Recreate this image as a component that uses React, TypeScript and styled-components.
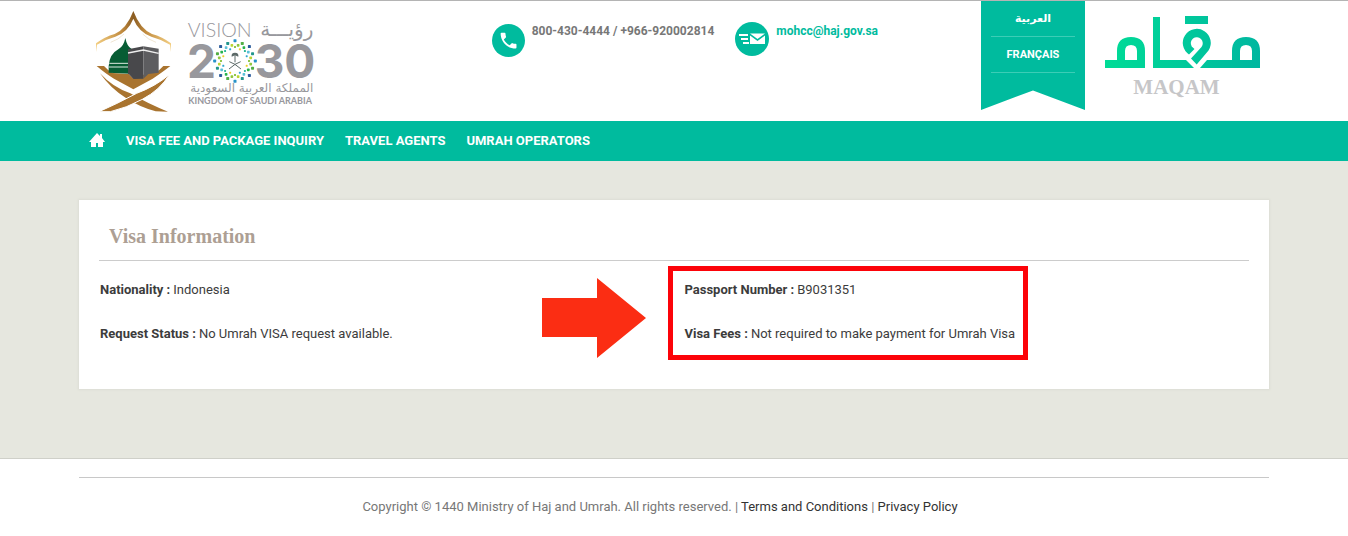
import React from "react";
import styled, { createGlobalStyle } from "styled-components";

const teal = "#00bb9e";

const GlobalStyle = createGlobalStyle`
  * { box-sizing: border-box; }
  body {
    margin: 0;
    background: #fff;
    color: #3c3c3c;
    font: 13px/20px Roboto, "Liberation Sans", sans-serif;
  }
  a { color: inherit; text-decoration: none; }
`;

const Container = styled.div`
  width: 100%;
  max-width: 1190px;
  margin: 0 auto;
`;

const Header = styled.header`
  border-top: 1px solid #b4b4b4;
`;

const HeaderRow = styled(Container)`
  display: flex;
  height: 120px;
  padding: 0 9px 0 16px;
`;

const LogoLink = styled.a`
  display: block;
  padding-top: 9px;
  svg { display: block; }
`;

const Contacts = styled.div`
  display: flex;
  flex: 1;
  justify-content: flex-end;
  gap: 21px;
  padding: 21px 103px 0 0;
`;

const Contact = styled.a<{ $accent?: boolean }>`
  display: flex;
  gap: 7px;
  align-items: flex-start;
  white-space: nowrap;
  font-size: 12px;
  line-height: 18px;
  font-weight: 700;
  color: ${(p) => (p.$accent ? teal : "#777")};
`;

const Ribbon = styled.div`
  width: 104px;
  height: 109px;
  padding: 0 10px;
  background: ${teal};
  clip-path: polygon(0 0, 100% 0, 100% 100%, 50% 82%, 0 100%);
`;

const Language = styled.a`
  display: block;
  height: 36px;
  border-bottom: 1px solid #3ccdb6;
  color: #fff;
  font: 700 11px/36px Roboto, "DejaVu Sans", sans-serif;
  text-align: center;
`;

const Brand = styled.a`
  display: flex;
  flex-direction: column;
  align-items: center;
  padding: 15px 0 0 20px;
`;

const BrandName = styled.span`
  padding-right: 12px;
  color: #c6c6c8;
  font: 700 21px/36px "Liberation Serif", serif;
`;

const Nav = styled.nav`
  background: ${teal};
`;

const NavRow = styled(Container)`
  display: flex;
  align-items: center;
  gap: 21px;
  height: 40px;
  padding: 0 10px;
  color: #fff;
  font-size: 13px;
  font-weight: 700;
  svg { display: block; }
`;

const Main = styled.main`
  padding: 39px 0 69px;
  background: #e6e7df;
  border-bottom: 1px solid #cfd0c9;
`;

const Card = styled(Container)`
  padding: 20px 20px 33px;
  background: #fff;
  box-shadow: 0 0 2px 1px #dcddd5;
`;

const Title = styled.h1`
  margin: 0;
  padding: 0 10px 8px;
  border-bottom: 1px solid #ccc;
  color: #ad9f94;
  font: 700 20px/32px "Liberation Serif", serif;
`;

const Details = styled.div`
  display: grid;
  grid-template-columns: 1fr 1fr;
  column-gap: 20px;
  padding: 7px 0 0 1px;
`;

const Column = styled.dl`
  position: relative;
  margin: 0;
`;

const Field = styled.div`
  display: flex;
  gap: 3px;
  line-height: 44px;
  dt { font-weight: 700; }
  dd { margin: 0; }
`;

const Highlight = styled.div`
  position: absolute;
  left: -17px;
  top: -2px;
  width: 360px;
  height: 94px;
  border: 5px solid #fc0309;
  pointer-events: none;
`;

const Arrow = styled.svg`
  position: absolute;
  left: -143px;
  top: 10px;
`;

const FooterRow = styled(Container)`
  margin-top: 18px;
  padding: 19px 28px 19px 0;
  border-top: 1px solid #c8c8c8;
  color: #777;
  text-align: center;
  a { color: #333; }
`;

export default function App() {
  return (
    <>
      <GlobalStyle />
      <Header>
        <HeaderRow>
          <LogoLink href="#" aria-label="Home page">
            <VisionLogo />
          </LogoLink>
          <Contacts>
            <Contact href="tel:8004304444">
              <PhoneIcon />
              800-430-4444 / +966-920002814
            </Contact>
            <Contact href="mailto:mohcc@haj.gov.sa" $accent>
              <MailIcon />
              mohcc@haj.gov.sa
            </Contact>
          </Contacts>
          <Ribbon>
            <Language href="#" lang="ar">العربية</Language>
            <Language href="#" lang="fr">FRANÇAIS</Language>
          </Ribbon>
          <Brand href="#">
            <MaqamMark />
            <BrandName>MAQAM</BrandName>
          </Brand>
        </HeaderRow>
      </Header>
      <Nav>
        <NavRow>
          <a href="#" aria-label="Home"><HomeIcon /></a>
          <a href="#">VISA FEE AND PACKAGE INQUIRY</a>
          <a href="#">TRAVEL AGENTS</a>
          <a href="#">UMRAH OPERATORS</a>
        </NavRow>
      </Nav>
      <Main>
        <Card>
          <Title>Visa Information</Title>
          <Details>
            <Column>
              <Field><dt>Nationality :</dt><dd>Indonesia</dd></Field>
              <Field><dt>Request Status :</dt><dd>No Umrah VISA request available.</dd></Field>
            </Column>
            <Column>
              <Field><dt>Passport Number :</dt><dd>B9031351</dd></Field>
              <Field><dt>Visa Fees :</dt><dd>Not required to make payment for Umrah Visa</dd></Field>
              <Highlight />
              <Arrow width="104" height="80" viewBox="0 0 104 80" aria-hidden="true">
                <path d="M0 20H55V0L104 40L55 80V59H0Z" fill="#fb2d13" />
              </Arrow>
            </Column>
          </Details>
        </Card>
      </Main>
      <footer>
        <FooterRow>
          Copyright © 1440 Ministry of Haj and Umrah. All rights reserved. |{" "}
          <a href="#">Terms and Conditions</a> | <a href="#">Privacy Policy</a>
        </FooterRow>
      </footer>
    </>
  );
}

const dotRings = [
  { r: 38, n: 16, size: 6, shift: 0, colors: ["#80bd2c", "#edcf25", "#29b796", "#2fa5cf"] },
  { r: 48, n: 16, size: 8, shift: 0.5, colors: ["#91c83e", "#28b34b", "#5cc0d8", "#b9d533"] },
  { r: 57, n: 16, size: 9, shift: 0, colors: ["#2793c8", "#52ae45", "#2b5c9b", "#22968c"] },
];

function VisionLogo() {
  return (
    <svg width="224" height="104" viewBox="45 30 672 312" role="img" aria-label="Vision 2030">
      <defs>
        <linearGradient id="gold" x1="0" x2="1">
          <stop offset="0" stopColor="#f3cf83" />
          <stop offset=".35" stopColor="#c08a3e" />
          <stop offset=".5" stopColor="#8a5c22" />
          <stop offset=".65" stopColor="#c08a3e" />
          <stop offset="1" stopColor="#f3cf83" />
        </linearGradient>
      </defs>
      <path d="M48 156V130Q75 110 104 102Q140 86 160 33Q180 86 216 102Q246 110 273 130V156L270 134Q244 118 214 110Q176 96 160 56Q144 96 106 110Q76 118 51 134Z" fill="url(#gold)" />
      <path d="M92 127Q116 119 132 102M228 127Q204 119 188 102" fill="none" stroke="#e9d9bd" strokeWidth="2" />
      <path d="M50 198H72Q84 212 98 219L146 222L160 236L205 218L224 219Q238 212 250 198H271Q240 222 218 236L160 268L102 236Q78 222 50 198Z" fill="#a9742f" />
      <path d="M86 218V198Q88 162 116 147Q131 139 136 114Q141 139 154 146L165 154V222Z" fill="#075c34" />
      <path d="M88 190H145M86 201H145" stroke="#dce9df" strokeWidth="3" />
      <path d="M144 148L190 139V236L160 237L144 220Z" fill="#48484b" />
      <path d="M190 139L236 146V218L205 222L190 236Z" fill="#5d5d60" />
      <path d="M144 159L190 150L236 160" fill="none" stroke="#eee" strokeWidth="4" />
      <path d="M60 220Q98 262 151 280Q205 312 264 335L227 334Q180 322 139 295Q91 265 60 220Z" fill="#a9742f" />
      <path d="M268 224Q226 259 170 280Q108 313 57 335L91 335Q139 324 187 298Q240 270 268 224Z" fill="#a9742f" stroke="#fff" strokeWidth="3" />
      <g fill="#98989d">
        <text x="323" y="111" fontFamily="Lato" fontWeight="300" fontSize="59">VISION</text>
        <text x="700" y="107" fontFamily="DejaVu Sans" fontSize="60" textAnchor="end">رؤيـــة</text>
        <text x="321" y="233" fontFamily="Inter" fontWeight="700" fontSize="138">2</text>
        <text x="524" y="233" fontFamily="Inter" fontWeight="700" fontSize="138">30</text>
        <text x="700" y="277" fontFamily="DejaVu Sans" fontSize="36" textAnchor="end">المملكة العربية السعودية</text>
        <text x="325" y="312" fontFamily="Lato" fontWeight="700" fontSize="27">KINGDOM OF SAUDI ARABIA</text>
      </g>
      {dotRings.map((ring) =>
        Array.from({ length: ring.n }, (_, i) => {
          const angle = ((i + ring.shift) / ring.n) * Math.PI * 2;
          const r = ring.r + (i % 2 === 0 && ring.shift === 0 ? 4 : 0);
          return (
            <rect
              key={`${ring.r}-${i}`}
              x={465 + Math.cos(angle) * r - ring.size / 2}
              y={183 + Math.sin(angle) * r - ring.size / 2}
              width={ring.size}
              height={ring.size}
              rx="2"
              fill={ring.colors[i % 4]}
            />
          );
        })
      )}
      <path d="M465 164V187M448 185Q464 190 483 207M482 185Q466 190 447 207" fill="none" stroke="#5c6a68" strokeWidth="3" />
      <path d="M455 170Q453 158 465 158Q477 158 475 170L465 166Z" fill="#5c6a68" />
    </svg>
  );
}

function PhoneIcon() {
  return (
    <svg width="33" height="35" viewBox="0 0 33 35" aria-hidden="true">
      <circle cx="16.500" cy="18.500" r="16.500" fill={teal} />
      <path transform="translate(6 8) scale(.88)" fill="#fff" d="M6.600 10.800c1.400 2.800 3.800 5.100 6.600 6.600l2.200-2.200c.3-.3.700-.4 1-.2 1.100.4 2.300.6 3.600.6.600 0 1 .4 1 1V20c0 .6-.4 1-1 1C10.600 21 3 13.400 3 4c0-.6.400-1 1-1h3.500c.6 0 1 .4 1 1 0 1.200.2 2.400.6 3.600.1.300 0 .7-.2 1z" />
    </svg>
  );
}

function MailIcon() {
  return (
    <svg width="34" height="34" viewBox="0 0 34 34" aria-hidden="true">
      <circle cx="17" cy="17" r="17" fill={teal} />
      <path d="M4 13H13M6 17H13M8 21H14" stroke="#fff" strokeWidth="2" />
      <path d="M15 11.500H30L22.500 17ZM15 13.500L22.500 19L30 13.500V22H15Z" fill="#fff" />
    </svg>
  );
}

function HomeIcon() {
  return (
    <svg width="16" height="18" viewBox="0 0 16 18" aria-hidden="true">
      <path d="M8 1L11 4V2H13V6L16 10H14V15H9V11H7V15H2V10H0Z" fill="#fff" />
    </svg>
  );
}

function MaqamMark() {
  return (
    <svg width="155" height="53" viewBox="0 0 155 53" aria-hidden="true">
      <defs>
        <linearGradient id="maqam" gradientUnits="userSpaceOnUse" x1="0" y1="0" x2="155" y2="0">
          <stop offset="0" stopColor="#00dc96" />
          <stop offset="1" stopColor="#00b7a0" />
        </linearGradient>
      </defs>
      <g fill="url(#maqam)">
        <path fillRule="evenodd" d="M0 44H12V35Q12 21 26 21Q40 21 40 35V52H0ZM20 44H32V35Q32 29 26 29Q20 29 20 35Z" />
        <path d="M48 1H55V44H81L89 52H48Z" />
        <path d="M80 0H103V8H80Z" />
        <path fillRule="evenodd" d="M95 52L102 44H127V35Q127 21 141 21Q155 21 155 35V52ZM135 44H147V35Q147 29 141 29Q135 29 135 35Z" />
        <path d="M84 38.500A14 14 0 1 1 103.500 34.500L91.700 48.500L86 42.500L96.500 31A6 6 0 1 0 86.700 30.500L89.500 33Z" />
      </g>
    </svg>
  );
}
